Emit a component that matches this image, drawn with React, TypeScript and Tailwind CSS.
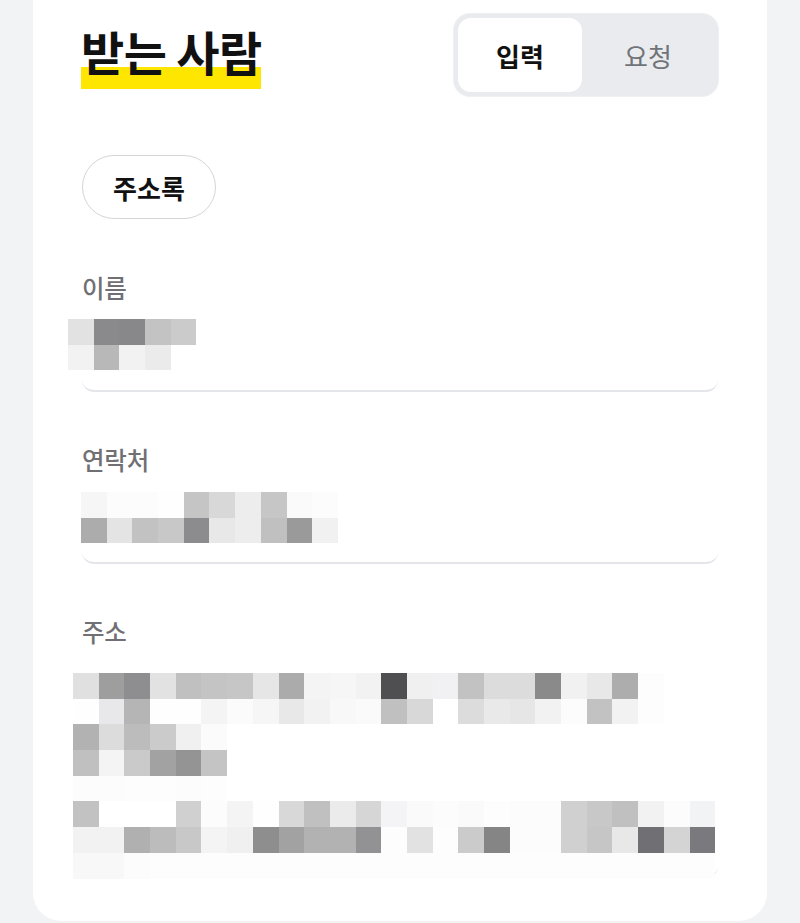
import React from "react";

type Cell = string | null;

const NAME: Cell[][] = [
  ["bg-[#e2e2e2]", "bg-[#8a8a8c]", "bg-[#88888a]", "bg-[#c3c3c3]", "bg-[#cbcbcb]"],
  ["bg-[#f2f2f2]", "bg-[#b8b8b8]", "bg-[#f2f2f2]", "bg-[#ebebeb]", null],
];

const CONTACT: Cell[][] = [
  ["bg-[#f6f6f6]", "bg-[#fcfcfc]", "bg-[#fcfcfc]", "bg-[#fefefe]", "bg-[#c5c5c5]", "bg-[#d8d8d8]", "bg-[#ededed]", "bg-[#c6c6c6]", "bg-[#fafafa]", "bg-[#fcfcfc]"],
  ["bg-[#acacac]", "bg-[#e4e4e4]", "bg-[#c2c2c2]", "bg-[#c8c8c8]", "bg-[#8c8c8e]", "bg-[#e8e8e8]", "bg-[#ededed]", "bg-[#c0c0c0]", "bg-[#9a9a9a]", "bg-[#f1f1f1]"],
];

const ADDRESS: Cell[][] = [
  ["bg-[#e0e0e0]", "bg-[#9e9e9e]", "bg-[#8e8e90]", "bg-[#e2e2e2]", "bg-[#c0c0c0]", "bg-[#c4c4c4]", "bg-[#c6c6c6]", "bg-[#e6e6e6]", "bg-[#ababab]", "bg-[#f4f4f4]", "bg-[#f6f6f6]", "bg-[#f2f2f2]", "bg-[#4f4f52]", "bg-[#f0f0f0]", "bg-[#f1f1f3]", "bg-[#c2c2c2]", "bg-[#dcdcdc]", "bg-[#dcdcdc]", "bg-[#8a8a8a]", "bg-[#f1f1f1]", "bg-[#e8e8e8]", "bg-[#adadad]", "bg-[#fdfdfd]", null, null],
  ["bg-[#fefefe]", "bg-[#e8e8ea]", "bg-[#b5b5b5]", "bg-[#fefefe]", "bg-[#fefefe]", "bg-[#f4f4f4]", "bg-[#fbfbfb]", "bg-[#f6f6f6]", "bg-[#e8e8e8]", "bg-[#f2f2f2]", "bg-[#f8f8f8]", "bg-[#fafafa]", "bg-[#c0c0c0]", "bg-[#d8d8d8]", null, "bg-[#dcdcdc]", "bg-[#e9e9e9]", "bg-[#e6e6e6]", "bg-[#f2f2f2]", "bg-[#fcfcfc]", "bg-[#c2c2c2]", "bg-[#f2f2f2]", "bg-[#fdfdfd]", null, null],
  ["bg-[#b2b2b2]", "bg-[#dcdcdc]", "bg-[#bcbcbc]", "bg-[#cbcbcb]", "bg-[#f0f0f0]", "bg-[#fbfbfb]", null, null, null, null, null, null, null, null, null, null, null, null, null, null, null, null, null, null, null],
  ["bg-[#c0c0c0]", "bg-[#f4f4f4]", "bg-[#cacaca]", "bg-[#a2a2a2]", "bg-[#949494]", "bg-[#c4c4c4]", null, null, null, null, null, null, null, null, null, null, null, null, null, null, null, null, null, null, null],
  ["bg-[#fcfcfc]", "bg-[#fcfcfc]", "bg-[#fdfdfd]", "bg-[#fdfdfd]", "bg-[#fcfcfc]", "bg-[#fdfdfd]", null, null, null, null, null, null, null, null, null, null, null, null, null, null, null, null, null, null, null],
  ["bg-[#c2c2c2]", null, null, null, "bg-[#d0d0d0]", "bg-[#fcfcfc]", "bg-[#f4f4f4]", "bg-[#fefefe]", "bg-[#d8d8d8]", "bg-[#c0c0c0]", "bg-[#ebebeb]", "bg-[#d6d6d6]", "bg-[#f4f4f6]", "bg-[#fafafa]", "bg-[#fcfcfc]", "bg-[#fafafa]", "bg-[#fdfdfd]", "bg-[#fcfcfc]", "bg-[#fcfcfc]", "bg-[#d0d0d0]", "bg-[#c8c8c8]", "bg-[#c0c0c0]", "bg-[#f2f2f2]", "bg-[#fcfcfc]", "bg-[#f2f3f4]"],
  ["bg-[#f2f2f2]", "bg-[#f2f2f2]", "bg-[#b0b0b0]", "bg-[#bcbcbc]", "bg-[#c8c8c8]", "bg-[#f4f4f4]", "bg-[#f0f0f0]", "bg-[#8e8e8e]", "bg-[#a2a2a2]", "bg-[#b2b2b2]", "bg-[#b2b2b2]", "bg-[#929294]", "bg-[#fdfdfd]", "bg-[#e2e2e2]", "bg-[#fdfdfd]", "bg-[#cbcbcb]", "bg-[#858585]", "bg-[#fcfcfc]", "bg-[#fcfcfc]", "bg-[#d0d0d0]", "bg-[#c6c6c6]", "bg-[#e8e8e8]", "bg-[#707074]", "bg-[#d4d4d4]", "bg-[#7a7a7e]"],
  ["bg-[#f8f8f8]", "bg-[#f8f8f8]", "bg-[#fcfcfc]", "bg-[#fdfdfd]", "bg-[#fdfdfd]", "bg-[#fdfdfd]", "bg-[#fdfdfd]", "bg-[#fdfdfd]", "bg-[#fdfdfd]", "bg-[#fdfdfd]", "bg-[#fdfdfd]", "bg-[#fdfdfd]", "bg-[#fdfdfd]", "bg-[#fdfdfd]", "bg-[#fdfdfd]", "bg-[#fdfdfd]", "bg-[#fdfdfd]", "bg-[#fdfdfd]", "bg-[#fdfdfd]", "bg-[#fdfdfd]", "bg-[#fdfdfd]", "bg-[#fdfdfd]", "bg-[#fdfdfd]", "bg-[#fdfdfd]", "bg-[#fdfdfd]"],
];

function Mosaic({ rows, className }: { rows: Cell[][]; className: string }) {
  return (
    <div className={"grid auto-rows-[25.7px] grid-cols-[repeat(25,25.7px)] " + className}>
      {rows.map((row, r) =>
        Array.from({ length: 25 }).map((_, c) => (
          <div key={r + "-" + c} className={row[c] ?? ""} />
        ))
      )}
    </div>
  );
}

function Field({
  label,
  rows,
  boxClass,
  mosaicClass,
}: {
  label: string;
  rows: Cell[][];
  boxClass: string;
  mosaicClass: string;
}) {
  return (
    <div className="flex flex-col">
      <div className="h-[30px] text-[24.5px] leading-[30px] font-medium tracking-[-0.2px] text-[#707074]">{label}</div>
      <div className={"mt-[5px] rounded-[12px] border-b-2 border-[#e4e6ea] bg-white " + boxClass}>
        <Mosaic rows={rows} className={mosaicClass} />
      </div>
    </div>
  );
}

export default function App() {
  return (
    <div
      className="h-[923px] w-[800px] overflow-hidden bg-[#f2f3f5]"
      style={{ fontFamily: '"Noto Sans CJK KR", "Noto Sans", sans-serif' }}
    >
      <div className="mx-[33px] h-[921px] w-[734px] rounded-b-[28px] bg-white px-[49px] pt-[14px]">
        <div className="flex h-[82px] items-center justify-between">
          <div className="relative mb-[8px] ml-[-1px]">
            <span className="absolute left-0 top-[44px] h-[22px] w-[180px] bg-[#ffe600]" />
            <h1 className="relative text-[47px] font-bold leading-[56px] tracking-[-0.6px] text-[#111111]">
              받는 사람
            </h1>
          </div>
          <div className="flex h-[82px] w-[264px] rounded-[16px] bg-[#e9ebee] p-[4px] shadow-[0_0_0_1px_#eef0f2]">
            <div className="flex w-[124px] items-center justify-center rounded-[13px] bg-white text-[26px] font-bold text-[#111111]">
              입력
            </div>
            <div className="flex flex-1 items-center justify-center text-[26px] text-[#707378]">요청</div>
          </div>
        </div>

        <div className="mt-[59px] flex">
          <div className="flex h-[64px] w-[134px] items-center justify-center rounded-full border-[1.5px] border-[#d3d5d9] text-[26px] font-bold text-[#111111]">
            주소록
          </div>
        </div>

        <div className="mt-[54px] flex flex-col gap-[53px]">
          <Field label="이름" rows={NAME} boxClass="h-[84px] pt-[11px]" mosaicClass="ml-[-14px]" />
          <Field label="연락처" rows={CONTACT} boxClass="h-[84px] pt-[12px]" mosaicClass="ml-[-1px]" />
          <Field label="주소" rows={ADDRESS} boxClass="h-[226px] pt-[21px]" mosaicClass="ml-[-9px]" />
        </div>
      </div>
    </div>
  );
}
